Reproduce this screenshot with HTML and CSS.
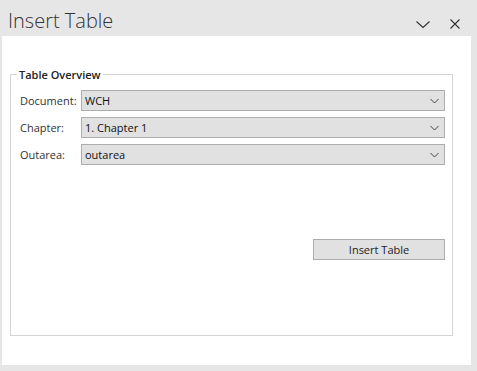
FILE: index.html
```html
<!DOCTYPE html>
<html>
<head>
<meta charset="utf-8">
<link rel="stylesheet" href="styles.css">
</head>
<body>
<div class="header">
  <div class="title">Insert Table</div>
  <div class="actions">
    <svg class="icon" width="14" height="9" viewBox="0 0 14 9"><path d="M0.5 1.5 L7 7.5 L13.5 1.5" fill="none" stroke="#333" stroke-width="1.1"/></svg>
    <svg class="icon" width="10" height="10" viewBox="0 0 10 10"><path d="M0.5 0.5 L9.5 9.5 M9.5 0.5 L0.5 9.5" fill="none" stroke="#333" stroke-width="1.1"/></svg>
  </div>
</div>
<div class="panel">
  <div class="group">
    <span class="legend">Table Overview</span>
    <div class="row">
      <span class="label">Document:</span>
      <div class="select"><span>WCH</span><svg width="9" height="6" viewBox="0 0 9 6"><path d="M0.5 1 L4.5 5 L8.5 1" fill="none" stroke="#444" stroke-width="1"/></svg></div>
    </div>
    <div class="row">
      <span class="label">Chapter:</span>
      <div class="select"><span>1. Chapter 1</span><svg width="9" height="6" viewBox="0 0 9 6"><path d="M0.5 1 L4.5 5 L8.5 1" fill="none" stroke="#444" stroke-width="1"/></svg></div>
    </div>
    <div class="row">
      <span class="label">Outarea:</span>
      <div class="select"><span>outarea</span><svg width="9" height="6" viewBox="0 0 9 6"><path d="M0.5 1 L4.5 5 L8.5 1" fill="none" stroke="#444" stroke-width="1"/></svg></div>
    </div>
    <div class="btnrow">
      <button class="btn">Insert Table</button>
    </div>
  </div>
</div>
</body>
</html>
```
FILE: styles.css
```css
html, body {
  margin: 0;
  padding: 0;
}
body {
  background: #e6e6e6;
  width: 477px;
  height: 371px;
  font-family: "Open Sans", "Noto Sans", sans-serif;
  color: #222;
  overflow: hidden;
}
.header {
  height: 36px;
  display: flex;
  align-items: flex-start;
  justify-content: space-between;
}
.title {
  font-family: "Open Sans", sans-serif;
  font-weight: 300;
  font-size: 20px;
  color: #333;
  padding: 7px 0 0 8px;
  line-height: 28px;
}
.actions {
  display: flex;
  align-items: center;
  gap: 20px;
  padding: 19px 17px 0 0;
}
.icon { display: block; }
.panel {
  background: #fff;
  margin: 0 6px 0 2px;
  height: 329px;
  padding: 38px 18px 0 8px;
  box-sizing: border-box;
}
.group {
  position: relative;
  border: 1px solid #d5d5d5;
  height: 262px;
  box-sizing: border-box;
  padding: 15px 7px 0 9px;
}
.legend {
  position: absolute;
  top: -9px;
  left: 6px;
  background: #fff;
  padding: 0 2px;
  font-size: 11px;
  font-weight: 600;
  color: #222;
  line-height: 17px;
}
.row {
  display: flex;
  align-items: center;
  height: 21px;
  margin-bottom: 6px;
}
.label {
  width: 61px;
  flex: none;
  font-size: 11px;
  color: #333;
}
.select {
  flex: 1;
  height: 21px;
  box-sizing: border-box;
  background: #e1e1e1;
  border: 1px solid #adadad;
  display: flex;
  align-items: center;
  justify-content: space-between;
  padding: 0 5px 0 3px;
  font-size: 11px;
  color: #111;
}
.select svg { display: block; }
.btnrow {
  display: flex;
  justify-content: flex-end;
  margin-top: 74px;
}
.btn {
  width: 132px;
  height: 21px;
  background: #e1e1e1;
  border: 1px solid #adadad;
  font-family: "Open Sans", "Noto Sans", sans-serif;
  font-size: 11px;
  color: #222;
  padding: 0;
}
```
